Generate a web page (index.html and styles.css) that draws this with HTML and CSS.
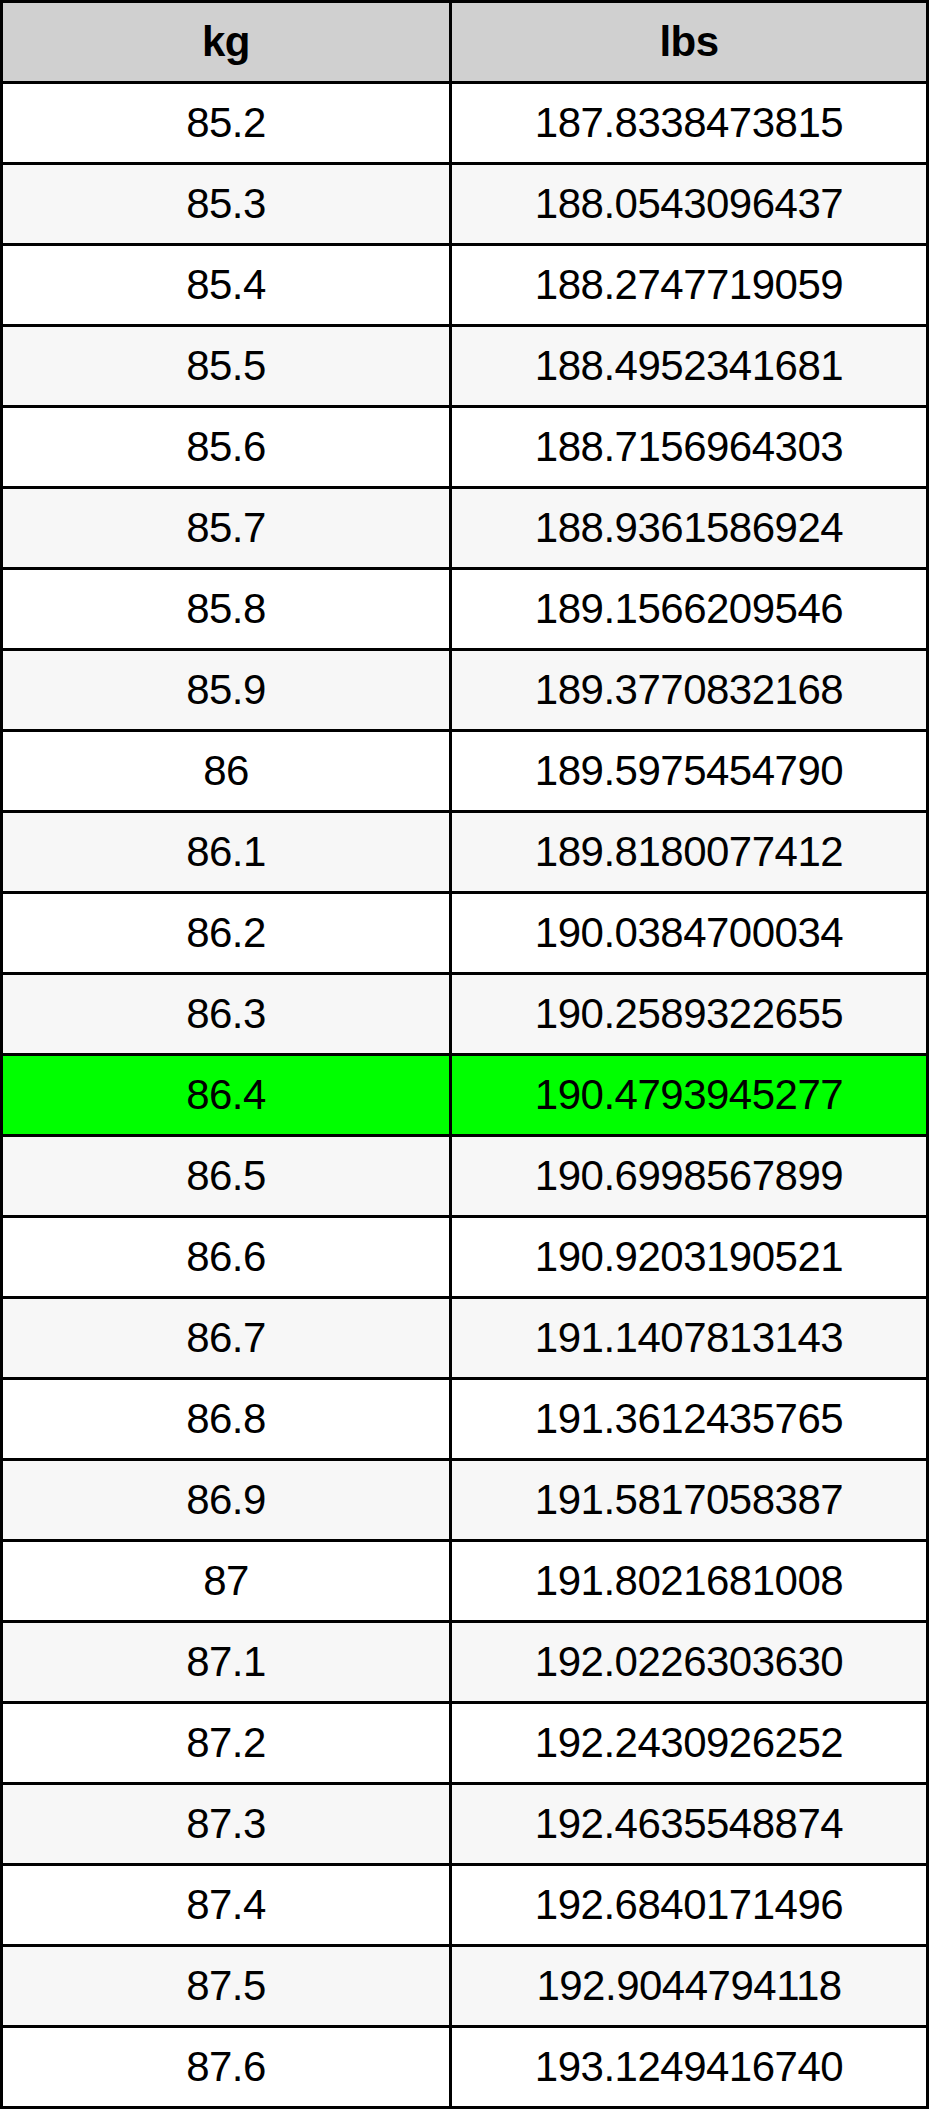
FILE: index.html
```html
<!DOCTYPE html>
<html lang="en">
<head>
<meta charset="utf-8">
<title>kg to lbs</title>
<link rel="stylesheet" href="styles.css">
</head>
<body>
<table class="conv">
<colgroup><col class="c1"><col class="c2"></colgroup>
<thead>
<tr><th>kg</th><th>lbs</th></tr>
</thead>
<tbody>
<tr><td>85.2</td><td>187.8338473815</td></tr>
<tr><td>85.3</td><td>188.0543096437</td></tr>
<tr><td>85.4</td><td>188.2747719059</td></tr>
<tr><td>85.5</td><td>188.4952341681</td></tr>
<tr><td>85.6</td><td>188.7156964303</td></tr>
<tr><td>85.7</td><td>188.9361586924</td></tr>
<tr><td>85.8</td><td>189.1566209546</td></tr>
<tr><td>85.9</td><td>189.3770832168</td></tr>
<tr><td>86</td><td>189.5975454790</td></tr>
<tr><td>86.1</td><td>189.8180077412</td></tr>
<tr><td>86.2</td><td>190.0384700034</td></tr>
<tr><td>86.3</td><td>190.2589322655</td></tr>
<tr class="hl"><td>86.4</td><td>190.4793945277</td></tr>
<tr><td>86.5</td><td>190.6998567899</td></tr>
<tr><td>86.6</td><td>190.9203190521</td></tr>
<tr><td>86.7</td><td>191.1407813143</td></tr>
<tr><td>86.8</td><td>191.3612435765</td></tr>
<tr><td>86.9</td><td>191.5817058387</td></tr>
<tr><td>87</td><td>191.8021681008</td></tr>
<tr><td>87.1</td><td>192.0226303630</td></tr>
<tr><td>87.2</td><td>192.2430926252</td></tr>
<tr><td>87.3</td><td>192.4635548874</td></tr>
<tr><td>87.4</td><td>192.6840171496</td></tr>
<tr><td>87.5</td><td>192.9044794118</td></tr>
<tr><td>87.6</td><td>193.1249416740</td></tr>
</tbody>
</table>
</body>
</html>
```
FILE: styles.css
```css
html, body {
  margin: 0;
  padding: 0;
  background: #ffffff;
}

.conv {
  table-layout: fixed;
  border-collapse: separate;
  border-spacing: 0;
  width: 929px;
  border-top: 3px solid #000;
  border-left: 3px solid #000;
  font-family: "Liberation Sans", Arial, sans-serif;
  font-size: 42px;
  letter-spacing: -0.5px;
  color: #000;
}

.c1 { width: 449px; }
.c2 { width: 477px; }

.conv th,
.conv td {
  height: 78px;
  padding: 0;
  text-align: center;
  vertical-align: middle;
  border-right: 3px solid #000;
  border-bottom: 3px solid #000;
  line-height: 1;
}

.conv th {
  background: #d0d0d0;
  font-weight: bold;
}

.conv tbody tr:nth-child(odd) td { background: #ffffff; }
.conv tbody tr:nth-child(even) td { background: #f7f7f7; }
.conv tbody tr.hl td { background: #00ff00; }
```
